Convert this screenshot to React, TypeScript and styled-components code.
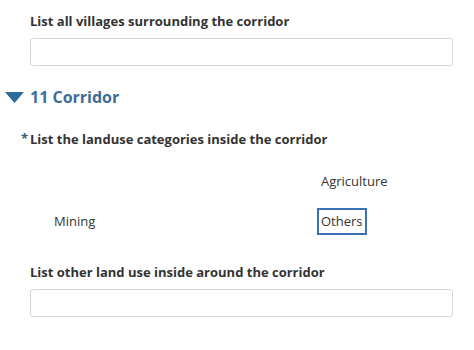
import styled, { createGlobalStyle } from "styled-components";

const GlobalStyle = createGlobalStyle`
  body {
    margin: 0;
    background: #ffffff;
    font-family: "Open Sans", "Liberation Sans", sans-serif;
    color: #333333;
  }
`;

const Page = styled.div`
  width: 474px;
  height: 350px;
  overflow: hidden;
  box-sizing: border-box;
  padding: 12px 21px 0 0;
`;

const Field = styled.div<{ $gap?: number }>`
  padding-left: 30px;
  margin-top: ${(p) => p.$gap ?? 0}px;
`;

const Label = styled.div<{ $required?: boolean }>`
  position: relative;
  font-size: 13px;
  font-weight: 700;
  line-height: 18px;
  color: #333333;
  margin-bottom: 8px;
  &::before {
    content: ${(p) => (p.$required ? '"*"' : "none")};
    position: absolute;
    left: -9px;
    top: -1px;
    color: #3d5a78;
  }
`;

const TextBox = styled.div`
  height: 28px;
  box-sizing: border-box;
  border: 1px solid #d6d6d6;
  border-radius: 3px;
  background: #ffffff;
`;

const Section = styled.div`
  display: flex;
  align-items: center;
  margin: 20px 0 22px;
  color: #3c6d99;
  font-size: 16px;
  font-weight: 700;
`;

const Caret = styled.svg`
  width: 19px;
  height: 11px;
  margin: 0 6px 0 5px;
`;

const Options = styled.div`
  display: grid;
  grid-template-columns: 267px auto;
  row-gap: 13px;
  padding: 12px 0 0 24px;
  font-size: 13px;
`;

const Option = styled.span<{ $focused?: boolean }>`
  justify-self: start;
  line-height: 21px;
  padding: 1px 2px;
  border: 2px solid ${(p) => (p.$focused ? "#3a72b5" : "transparent")};
  margin-left: -4px;
`;

export default function App() {
  return (
    <Page>
      <GlobalStyle />
      <Field>
        <Label>List all villages surrounding the corridor</Label>
        <TextBox />
      </Field>
      <Section>
        <Caret viewBox="0 0 19 11">
          <path d="M0 0 H19 L9.5 11 Z" fill="#2d6aa0" />
        </Caret>
        11 Corridor
      </Section>
      <Field>
        <Label $required>List the landuse categories inside the corridor</Label>
        <Options>
          <Option />
          <Option>Agriculture</Option>
          <Option>Mining</Option>
          <Option $focused>Others</Option>
        </Options>
      </Field>
      <Field $gap={28}>
        <Label>List other land use inside around the corridor</Label>
        <TextBox />
      </Field>
    </Page>
  );
}
